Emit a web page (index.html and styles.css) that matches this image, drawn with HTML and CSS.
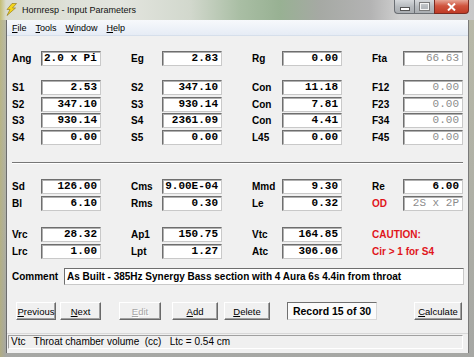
FILE: index.html
```html
<!DOCTYPE html>
<html lang="en">
<head>
  <meta charset="UTF-8" />
  <title>Hornresp - Input Parameters</title>
  <link rel="stylesheet" href="styles.css">
</head>
<body>
  <div class="window">
    <div class="titlebar">
      <svg class="app-icon" width="11" height="13" viewBox="0 0 11 13">
        <polygon points="6,0.5 10.5,0.5 6.5,5 9.5,5 1,12.5 4,6.5 1,6.5" fill="#f3d41c" stroke="#8a7010" stroke-width="0.6" />
      </svg>
      <span class="title">Hornresp - Input Parameters</span>
      <div class="caption">
        <span class="cap-btn cap-min"><i></i></span>
        <span class="cap-btn cap-max"><i></i></span>
        <span class="cap-btn cap-close">
          <svg width="9" height="8" viewBox="0 0 9 8"><path d="M1 0.5 L8 7.5 M8 0.5 L1 7.5" stroke="#fff" stroke-width="2" /></svg>
        </span>
      </div>
    </div>

    <div class="frame">
      <div class="inner">
        <div class="menubar">
          <span><u>F</u>ile</span>
          <span><u>T</u>ools</span>
          <span><u>W</u>indow</span>
          <span><u>H</u>elp</span>
        </div>

        <div class="client">
          <!-- angle / generator row -->
          <div class="params">
            <div class="field"><label>Ang</label><span class="box left">2.0 x Pi</span></div>
            <div class="field"><label>Eg</label><span class="box">2.83</span></div>
            <div class="field"><label>Rg</label><span class="box">0.00</span></div>
            <div class="field"><label>Fta</label><span class="box off">66.63</span></div>
          </div>

          <!-- horn segments -->
          <div class="params gap-s">
            <div class="field"><label>S1</label><span class="box">2.53</span></div>
            <div class="field"><label>S2</label><span class="box">347.10</span></div>
            <div class="field"><label>Con</label><span class="box">11.18</span></div>
            <div class="field"><label>F12</label><span class="box off">0.00</span></div>

            <div class="field"><label>S2</label><span class="box">347.10</span></div>
            <div class="field"><label>S3</label><span class="box">930.14</span></div>
            <div class="field"><label>Con</label><span class="box">7.81</span></div>
            <div class="field"><label>F23</label><span class="box off">0.00</span></div>

            <div class="field"><label>S3</label><span class="box">930.14</span></div>
            <div class="field"><label>S4</label><span class="box">2361.09</span></div>
            <div class="field"><label>Con</label><span class="box">4.41</span></div>
            <div class="field"><label>F34</label><span class="box off">0.00</span></div>

            <div class="field"><label>S4</label><span class="box">0.00</span></div>
            <div class="field"><label>S5</label><span class="box">0.00</span></div>
            <div class="field"><label>L45</label><span class="box">0.00</span></div>
            <div class="field"><label>F45</label><span class="box off">0.00</span></div>
          </div>

          <hr class="sep">

          <!-- driver -->
          <div class="params gap-d">
            <div class="field"><label>Sd</label><span class="box">126.00</span></div>
            <div class="field"><label>Cms</label><span class="box">9.00E-04</span></div>
            <div class="field"><label>Mmd</label><span class="box">9.30</span></div>
            <div class="field"><label>Re</label><span class="box">6.00</span></div>

            <div class="field"><label>Bl</label><span class="box">6.10</span></div>
            <div class="field"><label>Rms</label><span class="box">0.30</span></div>
            <div class="field"><label>Le</label><span class="box">0.32</span></div>
            <div class="field"><label class="red">OD</label><span class="box off">2S x 2P</span></div>
          </div>

          <!-- chambers -->
          <div class="params gap-c">
            <div class="field"><label>Vrc</label><span class="box">28.32</span></div>
            <div class="field"><label>Ap1</label><span class="box">150.75</span></div>
            <div class="field"><label>Vtc</label><span class="box">164.85</span></div>
            <div class="field"><span class="note red">CAUTION:</span></div>

            <div class="field"><label>Lrc</label><span class="box">1.00</span></div>
            <div class="field"><label>Lpt</label><span class="box">1.27</span></div>
            <div class="field"><label>Atc</label><span class="box">306.06</span></div>
            <div class="field"><span class="note red">Cir &gt; 1 for S4</span></div>
          </div>

          <div class="comment-row">
            <label>Comment</label>
            <span class="comment-box">As Built - 385Hz Synergy Bass section with 4 Aura 6s 4.4in from throat</span>
          </div>

          <div class="buttons">
            <button class="btn b-prev"><u>P</u>revious</button>
            <button class="btn b-next"><u>N</u>ext</button>
            <button class="btn b-edit" disabled><u>E</u>dit</button>
            <button class="btn b-add"><u>A</u>dd</button>
            <button class="btn b-del"><u>D</u>elete</button>
            <span class="record">Record 15 of 30</span>
            <button class="btn b-calc"><u>C</u>alculate</button>
          </div>
        </div>

        <div class="statusbar">
          <span class="panel">Vtc   Throat chamber volume  (cc)   Ltc = 0.54 cm</span>
          <span class="grip"></span>
        </div>
      </div>
    </div>
  </div>
</body>
</html>
```

FILE: styles.css
```css
html, body {
  margin: 0;
  padding: 0;
  overflow: hidden;
}
body {
  font-family: "Liberation Sans Narrow", "Liberation Sans", Arial, sans-serif;
  font-size: 10px;
  color: #000;
}
.window {
  width: 474px;
  height: 357px;
  display: flex;
  flex-direction: column;
  background: #b4b5b0;
}

/* title bar */
.titlebar {
  height: 20px;
  flex: none;
  display: flex;
  align-items: center;
  background: linear-gradient(90deg, #c4bd72 0, #d9dbce 6px, #e3e5df 120px, #d2d8cd 190px, #a9bea4 240px, #98b193 280px, #a6a9a4 320px, #b3b3b3 370px, #cfcfcf 400px, #c8c8c8 474px);
}
.app-icon {
  margin-left: 6px;
  margin-top: -2px;
}
.title {
  margin-left: 5px;
  font-family: "Liberation Sans", Arial, sans-serif;
  font-size: 9px;
  color: #111;
}
.caption {
  margin-left: auto;
  margin-right: 5px;
  align-self: flex-start;
  display: flex;
  height: 14px;
}
.cap-btn {
  height: 14px;
  box-sizing: border-box;
  border: 1px solid #6b6f74;
  border-top: none;
  display: flex;
  align-items: center;
  justify-content: center;
  background: linear-gradient(#d6d9dc, #b7bbbf 50%, #a9adb1);
}
.cap-min {
  width: 20px;
  border-radius: 0 0 0 4px;
  border-right: none;
}
.cap-min i {
  width: 8px;
  height: 2px;
  margin-top: 5px;
  background: #fff;
  border: 1px solid #555;
}
.cap-max {
  width: 20px;
  border-right: none;
}
.cap-max i {
  width: 7px;
  height: 5px;
  border: 1px solid #f4f4f4;
  outline: 1px solid #7a7a7a;
}
.cap-close {
  width: 35px;
  border-radius: 0 0 4px 0;
  border-color: #7a2a20;
  background: linear-gradient(#e6a595, #d0553f 45%, #c03a24);
}

/* frame and menu */
.frame {
  flex: 1;
  padding: 0 6px 5px 6px;
  display: flex;
  background: linear-gradient(90deg, rgba(190, 180, 90, .45) 0, rgba(190, 180, 90, 0) 6px), linear-gradient(#b8b9a8, #a6a7a4);
}
.inner {
  flex: 1;
  display: flex;
  flex-direction: column;
  border-left: 1px solid #6c6c6c;
  border-right: 1px solid #7a7a7a;
}
.menubar {
  height: 16px;
  flex: none;
  box-sizing: border-box;
  display: flex;
  align-items: center;
  gap: 9px;
  padding-left: 5px;
  background: linear-gradient(#f7f9fc, #e6ecf5);
  border-bottom: 1px solid #d6dfeb;
  font-family: "Liberation Sans", Arial, sans-serif;
  font-size: 9px;
}

/* client area */
.client {
  height: 297px;
  flex: none;
  box-sizing: border-box;
  padding: 15px 5px 0 5px;
  background: #f0f0f0;
}
.params {
  display: grid;
  grid-template-columns: 119px 121px 120px 91px;
  grid-auto-rows: 15px;
  row-gap: 1.5px;
}
.gap-s { margin-top: 14px; }
.gap-d { margin-top: 15px; }
.gap-c { margin-top: 16.5px; }
.field {
  display: flex;
  align-items: center;
}
label {
  font-weight: bold;
  font-size: 10px;
  flex: none;
}
.field:nth-child(4n+1) label { width: 29px; }
.field:nth-child(4n+2) label { width: 31px; }
.field:nth-child(4n+3) label { width: 30px; }
.field:nth-child(4n) label { width: 31px; }
.red {
  color: #e0151b;
}
.note {
  font-weight: bold;
  font-size: 10px;
}
.box {
  width: 60px;
  height: 15px;
  box-sizing: border-box;
  border: 1px solid;
  border-color: #6e6e6e #c9c9c9 #c9c9c9 #6e6e6e;
  box-shadow: inset 1px 1px 0 #b0b0b0;
  background: #fff;
  font-family: "Liberation Mono", "Courier New", monospace;
  font-weight: bold;
  font-size: 11px;
  line-height: 13px;
  text-align: right;
  padding-right: 3px;
  white-space: pre;
  overflow: hidden;
}
.box.left {
  text-align: left;
  padding-left: 2px;
}
.box.off {
  color: #8c8c8c;
  font-weight: normal;
}
.sep {
  margin: 17.5px 0 0;
  height: 0;
  border: 0;
  border-top: 1px solid #777;
  border-bottom: 1px solid #fff;
}

/* comment */
.comment-row {
  margin-top: 9.5px;
  height: 17px;
  display: flex;
  align-items: center;
}
.comment-row label {
  width: 52px;
}
.comment-box {
  flex: 1;
  height: 17px;
  box-sizing: border-box;
  margin-right: -1px;
  border: 1px solid;
  border-color: #6e6e6e #c9c9c9 #c9c9c9 #6e6e6e;
  background: #fff;
  font-weight: bold;
  font-size: 10px;
  line-height: 15px;
  padding-left: 2px;
  white-space: nowrap;
  overflow: hidden;
}

/* buttons */
.buttons {
  margin-top: 17px;
  height: 18px;
  display: flex;
}
.btn {
  height: 18px;
  padding: 0;
  box-sizing: border-box;
  border: 1px solid;
  border-color: #fff #696969 #696969 #fff;
  box-shadow: inset -1px -1px 0 #a0a0a0;
  background: #f0f0f0;
  font-family: inherit;
  font-size: 9.5px;
  color: #000;
  white-space: nowrap;
}
.btn:disabled {
  color: #a6a6a6;
  text-shadow: 1px 1px 0 #fff;
}
.b-prev { margin-left: 4px; width: 40px; }
.b-next { margin-left: 4px; width: 41px; }
.b-edit { margin-left: 18px; width: 42px; }
.b-add  { margin-left: 11px; width: 46px; }
.b-del  { margin-left: 6px; width: 46px; }
.b-calc { margin-left: 37px; width: 48px; }
.record {
  margin-left: 17px;
  width: 90px;
  height: 18px;
  box-sizing: border-box;
  border: 1px solid;
  border-color: #707070 #d8d8d8 #d8d8d8 #707070;
  background: #fbfbfb;
  display: flex;
  align-items: center;
  justify-content: center;
  font-weight: bold;
  font-size: 10.5px;
}

/* status bar */
.statusbar {
  flex: 1;
  display: flex;
  box-sizing: border-box;
  padding: 1px 2px 4px 1px;
  background: #f0f0f0;
  border-top: 1px solid #d8d8d8;
}
.panel {
  flex: 1;
  box-sizing: border-box;
  border: 1px solid;
  border-color: #a0a0a0 #fff #fff #a0a0a0;
  padding-left: 2px;
  font-size: 10px;
  line-height: 12px;
  white-space: pre;
}
.grip {
  width: 3px;
}
```
